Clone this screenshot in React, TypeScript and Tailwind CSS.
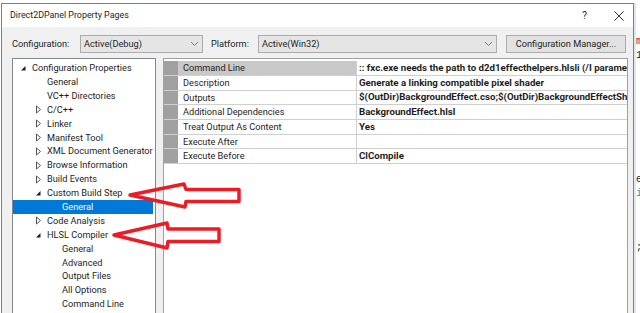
type TreeItem = {
  label: string;
  level: 0 | 1 | 2;
  exp?: "open" | "closed";
  selected?: boolean;
};

const tree: TreeItem[] = [
  { label: "Configuration Properties", level: 0, exp: "open" },
  { label: "General", level: 1 },
  { label: "VC++ Directories", level: 1 },
  { label: "C/C++", level: 1, exp: "closed" },
  { label: "Linker", level: 1, exp: "closed" },
  { label: "Manifest Tool", level: 1, exp: "closed" },
  { label: "XML Document Generator", level: 1, exp: "closed" },
  { label: "Browse Information", level: 1, exp: "closed" },
  { label: "Build Events", level: 1, exp: "closed" },
  { label: "Custom Build Step", level: 1, exp: "open" },
  { label: "General", level: 2, selected: true },
  { label: "Code Analysis", level: 1, exp: "closed" },
  { label: "HLSL Compiler", level: 1, exp: "open" },
  { label: "General", level: 2 },
  { label: "Advanced", level: 2 },
  { label: "Output Files", level: 2 },
  { label: "All Options", level: 2 },
  { label: "Command Line", level: 2 },
];

const indent = ["pl-[7px]", "pl-[22px]", "pl-[37px]"];

const props = [
  { name: "Command Line", value: ":: fxc.exe needs the path to d2d1effecthelpers.hlsli (/I parameter)", h: "h-[15px]", sel: true },
  { name: "Description", value: "Generate a linking compatible pixel shader", h: "h-[15px]" },
  { name: "Outputs", value: "$(OutDir)BackgroundEffect.cso;$(OutDir)BackgroundEffectShader.h", h: "h-[14px]" },
  { name: "Additional Dependencies", value: "BackgroundEffect.hlsl", h: "h-[15px]" },
  { name: "Treat Output As Content", value: "Yes", h: "h-[15px]" },
  { name: "Execute After", value: "", h: "h-[14px]" },
  { name: "Execute Before", value: "ClCompile", h: "h-[15px]" },
];

function Expander({ exp, selected }: { exp?: "open" | "closed"; selected?: boolean }) {
  if (exp === "open")
    return (
      <svg width="12" height="8" viewBox="0 0 12 8">
        <path d="M1 6.5 L5.5 6.5 L5.5 2 Z" fill={selected ? "#fff" : "#1e1e1e"} />
      </svg>
    );
  if (exp === "closed")
    return (
      <svg width="12" height="9" viewBox="0 0 12 9">
        <path d="M1.5 1 L5.5 4.5 L1.5 8 Z" fill="none" stroke="#555" strokeWidth="1" />
      </svg>
    );
  return <span className="w-[12px]" />;
}

function Chevron() {
  return (
    <svg width="9" height="6" viewBox="0 0 9 6">
      <path d="M1 1 L4.5 4.5 L8 1" fill="none" stroke="#7a7a7a" strokeWidth="1" />
    </svg>
  );
}

function Arrows() {
  return (
    <svg className="absolute top-0 left-0 pointer-events-none" width="640" height="313" viewBox="0 0 640 313">
      <path
        d="M130 195 L184 184 L186 189.5 L239 189.5 L239 201.5 L186 201.5 L185 207 Z"
        fill="none"
        stroke="#ed1c24"
        strokeWidth="3.5"
        strokeLinejoin="round"
      />
      <path
        d="M114 235 L167 223 L168 229 L219 229 L219 241.5 L168 241.5 L167 248 Z"
        fill="none"
        stroke="#ed1c24"
        strokeWidth="3.5"
        strokeLinejoin="round"
      />
    </svg>
  );
}

export default function App() {
  return (
    <div className="relative w-[640px] h-[313px] overflow-hidden bg-white font-['Roboto',sans-serif] text-[9.2px] text-[#1e1e1e]">
      {/* editor behind the dialog */}
      <div className="h-[3px] overflow-hidden flex">
        <div className="w-[470px]" />
        <div className="-mt-[12px] whitespace-nowrap font-['Liberation_Mono',monospace] text-[10px] text-[#2b6ab8]">
          <span className="underline decoration-[#c33]">CoreWindow::GetForCurrentThread</span>
          <span className="text-[#a31515]">()-&gt;Dispatcher</span>
        </div>
      </div>
      <div className="flex">
        <div className="w-[1px]" />
        <div className="w-[633px] h-[320px] flex flex-col border border-[#3b8fe2] bg-[#f0f0f0]">
          {/* title bar */}
          <div className="h-[23px] bg-white flex items-center justify-between pl-[8px] pr-[9px] text-[8.9px]">
            <span>Direct2DPanel Property Pages</span>
            <div className="flex items-center gap-[27px]">
              <span className="text-[10px]">?</span>
              <svg width="10" height="10" viewBox="0 0 10 10">
                <path d="M0.5 0.5 L9.5 9.5 M9.5 0.5 L0.5 9.5" stroke="#333" strokeWidth="1" />
              </svg>
            </div>
          </div>

          {/* configuration row */}
          <div className="flex items-center pl-[10px] pt-[8px]">
            <span className="w-[68px]">Configuration:</span>
            <div className="w-[123px] h-[18px] border border-[#acacac] bg-[#e5e5e5] flex items-center justify-between pl-[3px] pr-[3px]">
              <span>Active(Debug)</span>
              <Chevron />
            </div>
            <span className="ml-[8px] w-[47px]">Platform:</span>
            <div className="w-[239px] h-[18px] border border-[#acacac] bg-[#e5e5e5] flex items-center justify-between pl-[3px] pr-[3px]">
              <span>Active(Win32)</span>
              <Chevron />
            </div>
            <div className="ml-[9px] w-[120px] h-[18px] border border-[#adadad] bg-[#e1e1e1] flex items-center justify-center">
              Configuration Manager...
            </div>
          </div>

          {/* panels */}
          <div className="flex pl-[10px] mt-[5px] flex-1">
            <div className="w-[144px] border border-[#828790] bg-white pt-[2px] pr-[2px]">
              {tree.map((t, i) => (
                <div
                  key={i}
                  className={`h-[13.9px] flex items-center ${indent[t.level]} ${
                    t.selected ? "bg-[#0078d7] text-white" : ""
                  }`}
                >
                  <Expander exp={t.exp} selected={t.selected} />
                  <span className="whitespace-nowrap">{t.label}</span>
                </div>
              ))}
            </div>
            <div className="ml-[7px] w-[465px] border border-[#a0a0a0] bg-white pt-[2px]">
              {props.map((p, i) => (
                <div key={i} className={`flex ${p.h} border-b border-[#d0d0d0]`}>
                  <div className="w-[14px] bg-[#a0a0a0]" />
                  <div
                    className={`w-[179px] pl-[5px] flex items-center border-r border-[#d0d0d0] ${
                      p.sel ? "bg-[#c8c8c8]" : ""
                    }`}
                  >
                    {p.name}
                  </div>
                  <div className="flex-1 pl-[2px] flex items-center font-bold text-[9.7px] whitespace-nowrap overflow-hidden">
                    {p.value}
                  </div>
                </div>
              ))}
            </div>
          </div>
        </div>
        <div className="flex-1 border-l-[2px] border-[#dce8f4] pt-[32px] font-['Liberation_Mono',monospace] text-[10px] leading-[14px] whitespace-nowrap overflow-hidden">
          <div className="text-[#a31515]">m</div>
          <div>1</div>
          <div className="h-[110px]" />
          <div>e</div>
          <div className="text-[#2b91af]">i</div>
          <div className="h-[40px]" />
          <div>;</div>
        </div>
      </div>
      <Arrows />
    </div>
  );
}
